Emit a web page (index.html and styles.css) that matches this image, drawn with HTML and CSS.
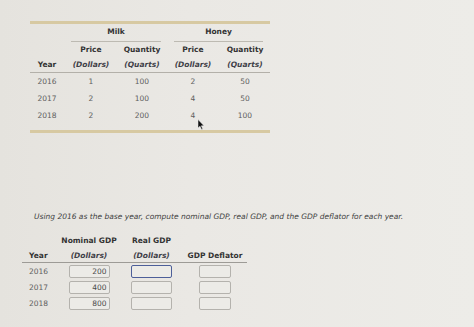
FILE: index.html
```html
<!DOCTYPE html>
<html>
<head>
<meta charset="utf-8">
<link rel="stylesheet" href="styles.css">
</head>
<body>
<div class="page">
  <table class="prices">
    <colgroup>
      <col class="c-year"><col class="c-mp"><col class="c-mq"><col class="c-hp"><col class="c-hq">
    </colgroup>
    <thead>
      <tr class="grp">
        <th></th>
        <th colspan="2"><div class="grp-label">Milk</div></th>
        <th colspan="2"><div class="grp-label grp-honey">Honey</div></th>
      </tr>
      <tr class="h1">
        <th></th><th>Price</th><th>Quantity</th><th>Price</th><th>Quantity</th>
      </tr>
      <tr class="h2">
        <th>Year</th><th><i>(Dollars)</i></th><th><i>(Quarts)</i></th><th><i>(Dollars)</i></th><th><i>(Quarts)</i></th>
      </tr>
    </thead>
    <tbody>
      <tr><td>2016</td><td>1</td><td>100</td><td>2</td><td>50</td></tr>
      <tr><td>2017</td><td>2</td><td>100</td><td>4</td><td>50</td></tr>
      <tr class="last"><td>2018</td><td>2</td><td>200</td><td>4</td><td>100</td></tr>
    </tbody>
  </table>

  <p class="question">Using 2016 as the base year, compute nominal GDP, real GDP, and the GDP deflator for each year.</p>

  <table class="answers">
    <colgroup>
      <col class="a-year"><col class="a-nom"><col class="a-real"><col class="a-def">
    </colgroup>
    <thead>
      <tr class="ah1"><th></th><th>Nominal GDP</th><th class="left">Real GDP</th><th></th></tr>
      <tr class="ah2"><th class="yr">Year</th><th><i>(Dollars)</i></th><th><i>(Dollars)</i></th><th>GDP Deflator</th></tr>
    </thead>
    <tbody>
      <tr><td class="yr">2016</td><td><input class="box nom" value="200" readonly></td><td><input class="box real focus" value=""></td><td><input class="box def" value=""></td></tr>
      <tr><td class="yr">2017</td><td><input class="box nom" value="400" readonly></td><td><input class="box real" value=""></td><td><input class="box def" value=""></td></tr>
      <tr><td class="yr">2018</td><td><input class="box nom" value="800" readonly></td><td><input class="box real" value=""></td><td><input class="box def" value=""></td></tr>
    </tbody>
  </table>

  <svg class="cursor" width="8" height="11" viewBox="0 0 8 11"><path d="M1 0.5 L1 9 L3 7.2 L4.6 10.5 L5.8 10 L4.3 6.8 L7 6.8 Z" fill="#111" stroke="#eee" stroke-width="0.5"/></svg>
</div>
</body>
</html>
```
FILE: styles.css
```css
html, body {
  margin: 0;
  padding: 0;
}
body {
  background: linear-gradient(90deg, #e5e3de 0%, #eae8e4 40%, #edece8 100%);
  width: 474px;
  height: 327px;
  overflow: hidden;
  font-family: "DejaVu Sans", Verdana, sans-serif;
  font-size: 7.5px;
  color: #444;
}
.page {
  position: relative;
  padding: 21px 0 0 0;
}
.prices {
  margin-left: 30px;
  width: 240px;
  border-collapse: collapse;
  table-layout: fixed;
  border-top: 3px solid #d7c9a2;
  border-bottom: 3px solid #d7c9a2;
}
.c-year { width: 34px; }
.c-mp { width: 54px; }
.c-mq { width: 48px; }
.c-hp { width: 54px; }
.c-hq { width: 50px; }
.prices th, .prices td {
  padding: 0;
  text-align: center;
  white-space: nowrap;
}
.prices th {
  font-weight: bold;
  color: #333;
}
.prices i {
  font-weight: bold;
  color: #3f4048;
}
.grp th { height: 18px; vertical-align: bottom; }
.grp-label {
  margin: 0 5px 0 7px;
  height: 17px;
  line-height: 14px;
  border-bottom: 1px solid #bdbab2;
  box-sizing: border-box;
}
.grp-honey { margin: 0 7px 0 8px; }
.h1 th { height: 15px; line-height: 15px; }
.h2 th {
  height: 15px;
  line-height: 14px;
  border-bottom: 1px solid #b3b0a9;
}
.prices td {
  height: 17px;
  line-height: 17px;
  color: #5e5e5e;
}
.prices .last td {
  height: 23px;
  line-height: 17px;
  vertical-align: top;
}
.question {
  margin: 79px 0 0 34px;
  font-style: italic;
  color: #3f3f3f;
  line-height: 10px;
}
.answers {
  margin: 12px 0 0 22px;
  width: 225px;
  border-collapse: collapse;
  table-layout: fixed;
}
.a-year { width: 36px; }
.a-nom { width: 62px; }
.a-real { width: 63px; }
.a-def { width: 64px; }
.answers th, .answers td {
  padding: 0;
  text-align: center;
  white-space: nowrap;
}
.answers th {
  font-weight: bold;
  color: #333;
}
.answers th.left { text-align: left; padding-left: 12px; }
.answers i { font-weight: bold; color: #3f4048; }
.answers .yr { text-align: left; padding-left: 7px; }
.ah1 th { height: 14px; line-height: 14px; }
.ah2 th {
  height: 14px;
  line-height: 13px;
  border-bottom: 1.5px solid #9d9b96;
}
.answers td {
  height: 16px;
  color: #5e5e5e;
}
.box {
  display: block;
  margin: 0 auto;
  box-sizing: border-box;
  height: 13px;
  border: 1px solid #b4b2ad;
  border-radius: 2px;
  background: #ecebe7;
  font-family: "DejaVu Sans", Verdana, sans-serif;
  font-size: 7.5px;
  color: #4a4a4a;
  text-align: right;
  padding: 0 2px 0 0;
  outline: none;
}
.nom { width: 41px; }
.real { width: 41px; }
.def { width: 32px; }
.focus {
  border: 1.5px solid #4d5f99;
}
.cursor {
  position: absolute;
  left: 197px;
  top: 119px;
}
```
